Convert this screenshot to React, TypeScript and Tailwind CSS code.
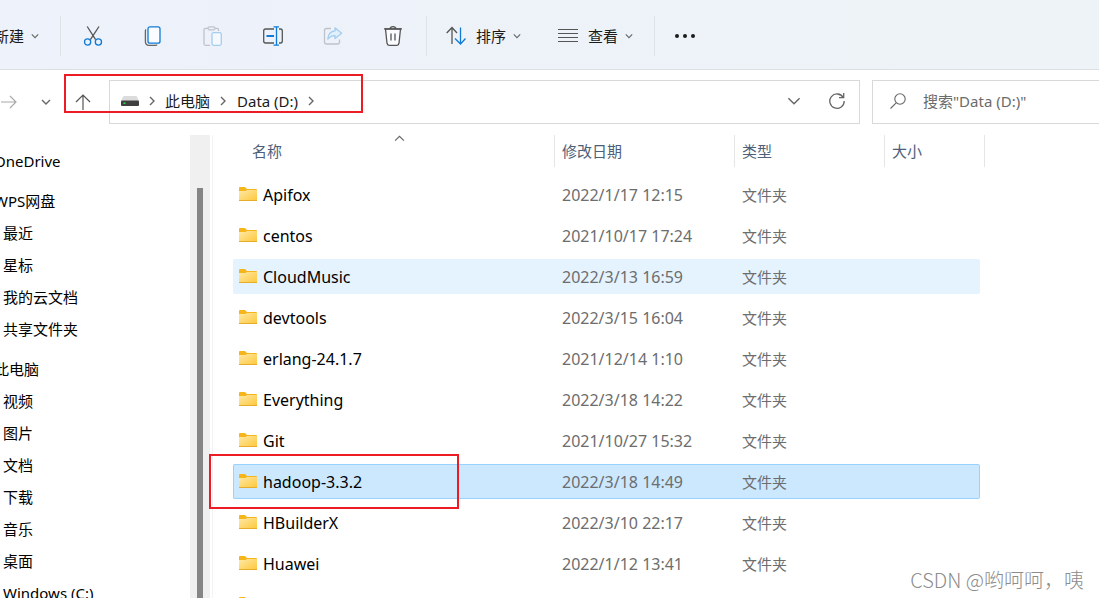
import type { ReactNode } from "react";

type Item = { name: string; date: string; state?: "hover" | "selected" };

const folders: Item[] = [
  { name: "Apifox", date: "2022/1/17 12:15" },
  { name: "centos", date: "2021/10/17 17:24" },
  { name: "CloudMusic", date: "2022/3/13 16:59", state: "hover" },
  { name: "devtools", date: "2022/3/15 16:04" },
  { name: "erlang-24.1.7", date: "2021/12/14 1:10" },
  { name: "Everything", date: "2022/3/18 14:22" },
  { name: "Git", date: "2021/10/27 15:32" },
  { name: "hadoop-3.3.2", date: "2022/3/18 14:49", state: "selected" },
  { name: "HBuilderX", date: "2022/3/10 22:17" },
  { name: "Huawei", date: "2022/1/12 13:41" }
];

const places = [
  { label: "OneDrive", children: [] },
  { label: "WPS网盘", children: ["最近", "星标", "我的云文档", "共享文件夹"] },
  {
    label: "此电脑",
    children: ["视频", "图片", "文档", "下载", "音乐", "桌面", "Windows (C:)"]
  }
];

const rowStyles = {
  none: "border-transparent",
  hover: "border-[#e5f3ff] bg-[#e5f3ff]",
  selected: "border-[#99d1ff] bg-[#cce8ff]"
};

function Chevron({ dir, size = 8 }: { dir: "down" | "right" | "up"; size?: number }) {
  const d = { down: "M1 3l4 4 4-4", right: "M3 1l4 4-4 4", up: "M1 7l4-4 4 4" }[dir];
  return (
    <svg
      aria-hidden="true"
      width={size}
      height={size}
      viewBox="0 0 10 10"
      fill="none"
      stroke="currentColor"
      strokeWidth={size > 10 ? 1 : 1.4}
      className="shrink-0"
    >
      <path d={d} />
    </svg>
  );
}

function Icon({ children }: { children: ReactNode }) {
  return (
    <svg
      aria-hidden="true"
      width="20"
      height="20"
      viewBox="0 0 20 20"
      fill="none"
      strokeWidth="1.3"
      className="shrink-0"
    >
      {children}
    </svg>
  );
}

function FolderIcon() {
  return (
    <svg aria-hidden="true" width="18" height="16" viewBox="0 0 18 16" className="shrink-0">
      <defs>
        <linearGradient id="folder" x1="0" y1="0" x2="1" y2="1">
          <stop offset="0" stopColor="#ffe9a6" />
          <stop offset="1" stopColor="#fdc739" />
        </linearGradient>
      </defs>
      <path d="M0 5V1Q0 0 1 0H6L8 2H17Q18 2 18 3V5Z" fill="#f5b51b" />
      <path d="M0 4H6.5L8 3H18V14H0Z" fill="url(#folder)" />
      <path d="M0 13H18V14H0Z" fill="#e8ac2c" />
    </svg>
  );
}

const actions = [
  {
    label: "剪切",
    icon: (
      <>
        <path d="M4.2 0.5L12.6 13.6M16 0.5L7.4 13.6" stroke="#555" />
        <circle cx="4.6" cy="16" r="3.1" stroke="#0f7bd6" />
        <circle cx="15.4" cy="16" r="3.1" stroke="#0f7bd6" />
      </>
    )
  },
  {
    label: "复制",
    icon: (
      <>
        <path d="M3 3.5Q2.4 4 2.4 5V15.5Q2.4 19.3 6 19.3H12.5Q13.6 19.3 14 18.7" stroke="#666" />
        <rect x="5" y="0.8" width="12" height="16.4" rx="2" fill="#fafcff" stroke="#0f7bd6" />
      </>
    )
  },
  {
    label: "粘贴",
    icon: (
      <>
        <path d="M5 2.3H2.5Q1 2.3 1 4V17.5Q1 19.3 2.5 19.3H7M12 2.3H14Q15.6 2.3 15.6 4V5" stroke="#bfc3c9" />
        <rect x="5" y="0.8" width="7" height="3" rx="1.5" stroke="#bfc3c9" />
        <rect x="9" y="6.7" width="9.3" height="12.6" rx="1.5" fill="#f5f9fe" stroke="#a5cdef" />
      </>
    )
  },
  {
    label: "重命名",
    icon: (
      <>
        <path d="M11 3H2.5Q0.7 3 0.7 5V15Q0.7 17 2.5 17H11M16 3H17.5Q19.3 3 19.3 5V15Q19.3 17 17.5 17H16" stroke="#555" />
        <path d="M13.5 1V19M10.5 0.8H16M10.5 19.2H16" stroke="#0f7bd6" />
        <path d="M3.5 10H11" stroke="#0f7bd6" strokeWidth="2" />
      </>
    )
  },
  {
    label: "共享",
    icon: (
      <>
        <path d="M8 2.5H3.5Q1.5 2.5 1.5 4.5V16Q1.5 18 3.5 18H14.5Q16.5 18 16.5 16V13.5" stroke="#bfc3c9" />
        <path
          d="M12 1.8L18.6 7.2L12 12.5V9.6Q8 9.3 4.8 13Q5.2 5.5 12 4.8Z"
          fill="#e2f0fc"
          stroke="#a5cdef"
          strokeLinejoin="round"
        />
      </>
    )
  },
  {
    label: "删除",
    icon: (
      <>
        <path d="M2.5 3L4 17.2Q4.3 19.3 6.2 19.3H13.8Q15.7 19.3 16 17.2L17.5 3Z" fill="#fafcff" stroke="#555" />
        <path d="M1 2.9H19M7 2.8Q7.4 0.7 10 0.7T13 2.8M8 7.5V14.5M12 7.5V14.5" stroke="#555" />
      </>
    )
  }
];

function Separator() {
  return <span className="h-10 w-px shrink-0 bg-[#dfe3e8]" />;
}

function Toolbar() {
  return (
    <header className="flex h-[70px] shrink-0 items-center border-b border-[#dce0e5] bg-linear-to-r from-[#edf2fb] to-[#eef3f7] pt-[3px] text-[#1b1b1b]">
      <button type="button" className="-ml-1.5 flex w-[66px] shrink-0 items-center gap-[7px] whitespace-nowrap">
        新建
        <span className="text-[#666]">
          <Chevron dir="down" />
        </span>
      </button>
      <Separator />
      <div className="mr-[3px] ml-0.5 flex">
        {actions.map((action) => (
          <button
            key={action.label}
            type="button"
            aria-label={action.label}
            className="flex h-10 w-[60px] items-center justify-center"
          >
            <Icon>{action.icon}</Icon>
          </button>
        ))}
      </div>
      <Separator />
      <button type="button" className="ml-[19px] flex shrink-0 items-center gap-2.5 whitespace-nowrap">
        <Icon>
          <path d="M6 18V1.5M0.7 7L6 1.5L11 7" stroke="#555" />
          <path d="M14.5 1.5V18M9 12.5L14.5 18L19.5 12.5" stroke="#0f7bd6" />
        </Icon>
        排序
        <span className="-ml-[3px] text-[#666]">
          <Chevron dir="down" />
        </span>
      </button>
      <button type="button" className="ml-[37px] flex shrink-0 items-center gap-2.5 whitespace-nowrap">
        <Icon>
          <path d="M0 3.5H20M0 7.5H20M0 11.5H20M0 15.5H20" stroke="#555" strokeWidth="1" />
        </Icon>
        查看
        <span className="-ml-[3px] mr-[21px] text-[#666]">
          <Chevron dir="down" />
        </span>
      </button>
      <Separator />
      <button type="button" aria-label="更多" className="ml-5">
        <Icon>
          <g fill="#1b1b1b">
            <circle cx="2" cy="10" r="2" />
            <circle cx="10" cy="10" r="2" />
            <circle cx="18" cy="10" r="2" />
          </g>
        </Icon>
      </button>
    </header>
  );
}

function AddressBar() {
  return (
    <div className="flex h-[65px] shrink-0 items-start pt-2.5 text-[#666]">
      <div className="flex h-11 w-[109px] shrink-0 items-center">
        <button type="button" aria-label="前进" className="w-[41px]">
          <svg aria-hidden="true" width="18" height="16" viewBox="0 0 18 16" fill="none" stroke="#aaa" strokeWidth="1.2">
            <path d="M1 8H16M10 2L16 8L10 14" />
          </svg>
        </button>
        <button type="button" aria-label="最近浏览的位置" className="w-[34px]">
          <Chevron dir="down" size={10} />
        </button>
        <button type="button" aria-label="上移">
          <svg aria-hidden="true" width="16" height="16" viewBox="0 0 16 16" fill="none" stroke="#555" strokeWidth="1.2">
            <path d="M8 16V1M1 8L8 1L15 8" />
          </svg>
        </button>
      </div>
      <nav
        aria-label="地址"
        className="flex h-11 min-w-0 flex-1 items-center whitespace-nowrap border border-[#d9d9d9] pr-3.5 pb-0.5 pl-[11px]"
      >
        <svg aria-hidden="true" width="18" height="10" viewBox="0 0 18 10" className="mr-2 shrink-0">
          <path d="M2.5 0H15.5L18 5H0Z" fill="#dcdcdc" />
          <rect y="4.5" width="18" height="5.5" rx="1" fill="#3f3f3f" />
          <rect x="2.5" y="6.5" width="2" height="1.5" fill="#2de04c" />
        </svg>
        <Chevron dir="right" size={10} />
        <a href="#pc" className="mx-2 text-[#1b1b1b]">
          此电脑
        </a>
        <Chevron dir="right" size={10} />
        <a href="#data" className="mr-2 ml-[9px] text-[#1b1b1b]">
          Data (D:)
        </a>
        <Chevron dir="right" size={10} />
        <button type="button" aria-label="历史记录" className="mr-7 ml-auto">
          <Chevron dir="down" size={14} />
        </button>
        <button type="button" aria-label="刷新">
          <svg aria-hidden="true" width="16" height="18" viewBox="0 0 16 18" fill="none" stroke="currentColor" strokeWidth="1.3">
            <path d="M14.2 5.5A7.2 7.2 0 1 0 15.2 9M14.7 1V5.6H10" />
          </svg>
        </button>
      </nav>
      <label className="ml-3 flex h-11 w-[227px] shrink-0 items-center gap-[17px] border border-r-0 border-[#d9d9d9] pb-0.5 pl-[17px]">
        <svg aria-hidden="true" width="16" height="16" viewBox="0 0 16 16" fill="none" stroke="currentColor" strokeWidth="1.1" className="shrink-0">
          <circle cx="10" cy="6" r="5.2" />
          <path d="M6.2 9.8L0.5 15.5" />
        </svg>
        <input
          type="text"
          aria-label="搜索"
          placeholder={'搜索"Data (D:)"'}
          className="min-w-0 flex-1 outline-none placeholder:text-[#6b6b6b]"
        />
      </label>
    </div>
  );
}

function Sidebar() {
  return (
    <aside className="flex w-[213px] shrink-0 overflow-hidden border-r border-[#f3f3f3]">
      <ul className="flex flex-1 flex-col gap-2 overflow-hidden pt-2.5 leading-8 whitespace-nowrap text-black">
        {places.map((place) => (
          <li key={place.label}>
            <a href="#place" className="-ml-1.5 block">
              {place.label}
            </a>
            <ul className="pl-[3px]">
              {place.children.map((child) => (
                <li key={child}>
                  <a href="#place" className="block">
                    {child}
                  </a>
                </li>
              ))}
            </ul>
          </li>
        ))}
      </ul>
      <div className="mr-0.5 flex w-5 justify-center bg-[#f0f0f0] pt-[53px]">
        <div className="w-1.5 bg-[#858585]" />
      </div>
    </aside>
  );
}

function FileTable() {
  const head = "p-0 text-left align-top font-normal";
  const headInner = "flex h-8 items-center border-r border-[#e5e5e5]";
  return (
    <main className="min-w-0 flex-1 overflow-hidden pl-5">
      <table className="-mt-1.5 w-[752px] table-fixed border-separate border-spacing-x-0 border-spacing-y-1.5 whitespace-nowrap text-[#6d6d6d]">
        <colgroup>
          <col className="w-[322px]" />
          <col className="w-[180px]" />
          <col className="w-[150px]" />
          <col className="w-[95px]" />
          <col className="w-[5px]" />
        </colgroup>
        <thead className="text-[#4c607a]">
          <tr className="h-9">
            <th className={head}>
              <div className={`${headInner} relative pl-[19px]`}>
                名称
                <span className="absolute -top-0.5 left-[161px] text-[#666]">
                  <Chevron dir="up" size={11} />
                </span>
              </div>
            </th>
            <th className={head}>
              <div className={`${headInner} pl-[7px]`}>修改日期</div>
            </th>
            <th className={head}>
              <div className={`${headInner} pl-[7px]`}>类型</div>
            </th>
            <th className={head} colSpan={2}>
              <div className={`${headInner} pl-[7px]`}>大小</div>
            </th>
          </tr>
        </thead>
        <tbody>
          {folders.map((item) => {
            const cell = `h-[35px] border-y py-0 ${rowStyles[item.state ?? "none"]}`;
            return (
              <tr key={item.name}>
                <td className={`${cell} rounded-l-xs border-l pr-0 pl-[5px] text-[16px] leading-5 text-black`}>
                  <span className="flex items-center gap-1.5">
                    <FolderIcon />
                    {item.name}
                  </span>
                </td>
                <td className={`${cell} pr-0 pl-[7px] text-[16px] leading-5`}>{item.date}</td>
                <td className={`${cell} pr-0 pl-[7px]`}>文件夹</td>
                <td className={`${cell} rounded-r-xs border-r`} />
                <td className="p-0" />
              </tr>
            );
          })}
          <tr>
            <td className="px-1.5 pt-2.5 pb-0">
              <FolderIcon />
            </td>
          </tr>
        </tbody>
      </table>
    </main>
  );
}

export default function App() {
  return (
    <div className="relative flex h-screen flex-col overflow-hidden bg-white font-['Noto_Sans','Noto_Sans_CJK_SC',sans-serif] text-[15px] leading-5">
      <Toolbar />
      <AddressBar />
      <div className="flex min-h-0 flex-1">
        <Sidebar />
        <FileTable />
      </div>
      <div className="pointer-events-none absolute top-[74px] left-16 h-[39px] w-[299px] border-2 border-[#ed1c24]" />
      <div className="pointer-events-none absolute top-[454px] left-[209px] h-[55px] w-[250px] border-2 border-[#ed1c24]" />
      <p className="absolute right-[15px] bottom-1 font-['Noto_Sans_CJK_SC',sans-serif] text-[20px] leading-7 font-light whitespace-nowrap text-[#8c8c8c]">
        CSDN @哟呵呵，咦
      </p>
    </div>
  );
}
